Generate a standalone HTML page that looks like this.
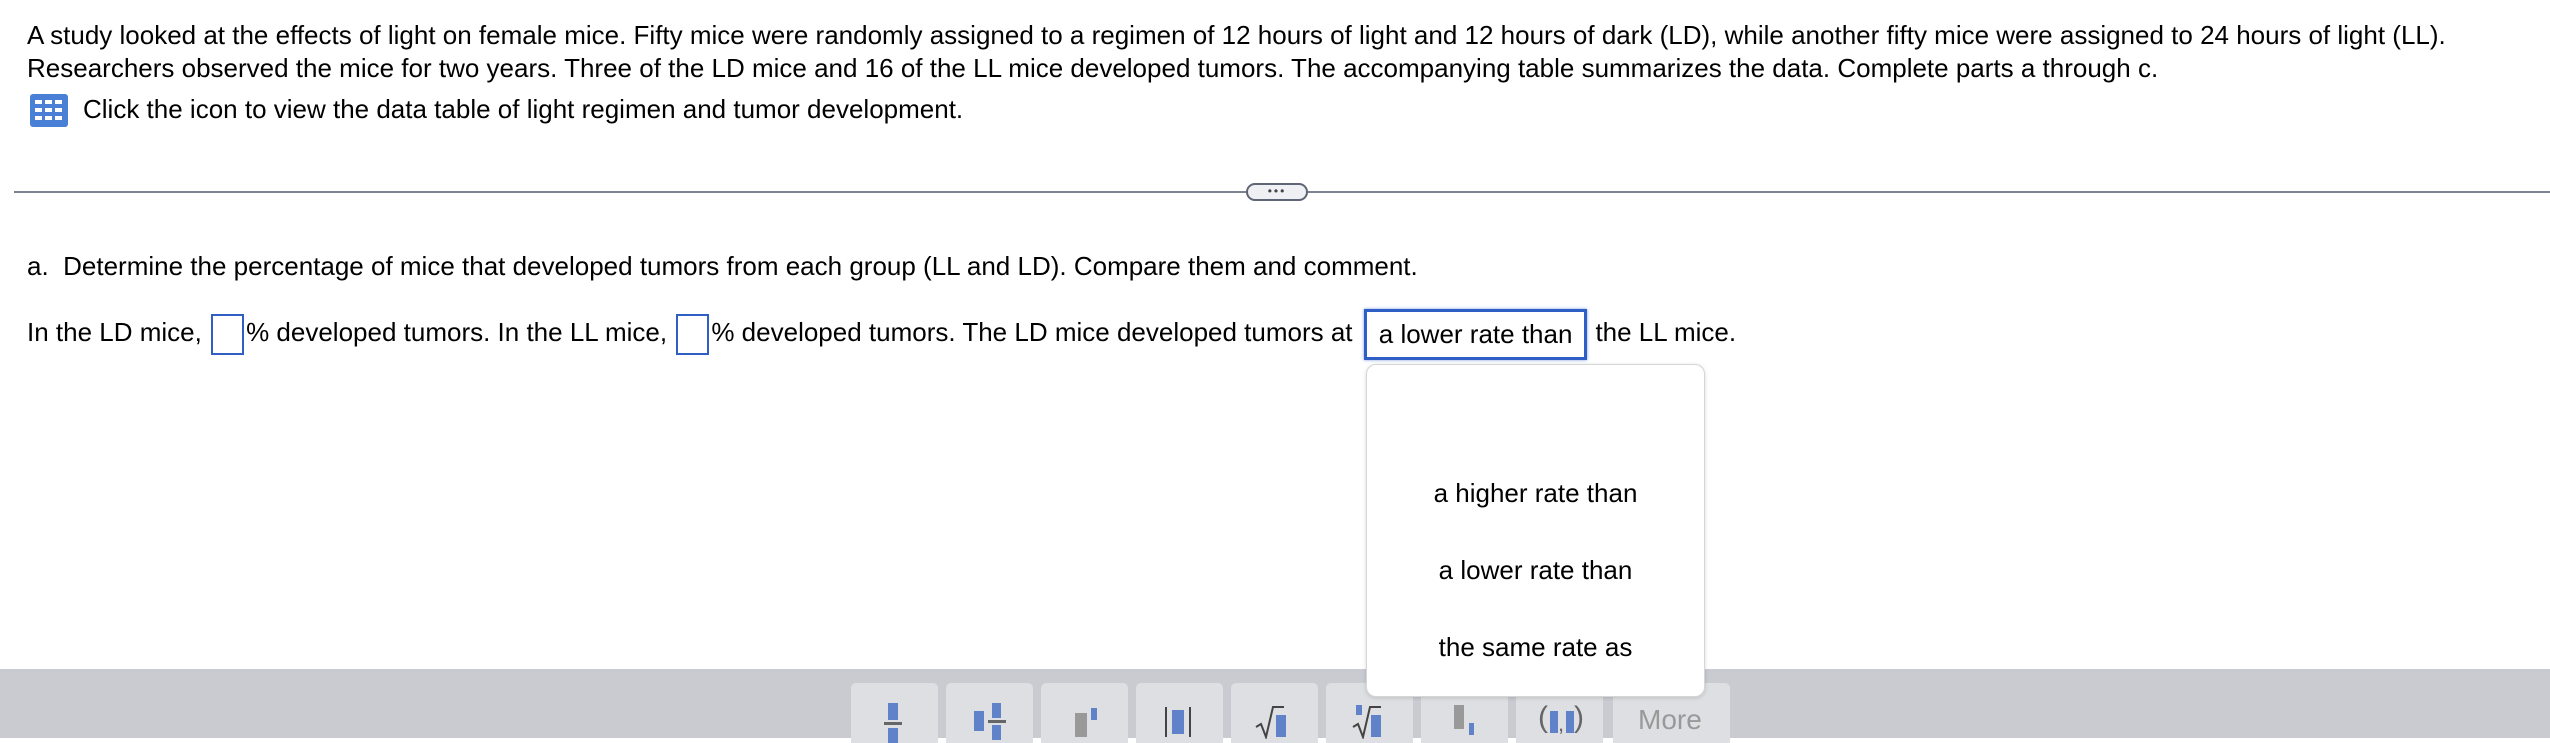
<!DOCTYPE html>
<html><head><meta charset="utf-8"><style>
*{margin:0;padding:0;box-sizing:border-box}
body{width:2550px;height:738px;background:#fff;font-family:"Liberation Sans",Arial,sans-serif;color:#000;position:relative;overflow:hidden;font-size:26px}
.t{position:absolute;white-space:nowrap}
.box{display:inline-block;width:33px;height:41px;border:2px solid #2f5fc4;vertical-align:middle;margin:0 2px}
.sel{display:inline-block;border:3px solid #2f5fc4;height:51px;line-height:45px;padding:0 12px;vertical-align:middle;margin:0 8px 0 4px;box-shadow:0 0 3px #7a9be0}
.band{position:absolute;left:0;top:669px;width:2550px;height:69px;background:#c9cbd1}
.btn{position:absolute;top:683px;width:87px;height:60px;background:#dedfe2;border-radius:5px 5px 0 0}
.bl{position:absolute;background:#5f82c9}
.gr{position:absolute;background:#999}
.dd{position:absolute;left:1366px;top:364px;width:339px;height:333px;background:#fff;border:1px solid #d6d6d6;border-radius:10px;box-shadow:0 1px 4px rgba(0,0,0,.15)}
.dd div{position:absolute;left:0;width:100%;text-align:center}
</style></head><body>
<div class="t" style="left:27px;top:20px">A study looked at the effects of light on female mice. Fifty mice were randomly assigned to a regimen of 12 hours of light and 12 hours of dark (LD), while another fifty mice were assigned to 24 hours of light (LL).</div>
<div class="t" style="left:27px;top:53px">Researchers observed the mice for two years. Three of the LD mice and 16 of the LL mice developed tumors. The accompanying table summarizes the data. Complete parts a through c.</div>
<svg style="position:absolute;left:30px;top:94px" width="38" height="33" viewBox="0 0 38 33"><rect x="0" y="0" width="38" height="33" rx="3" fill="#4a7fd6"/><g fill="#fff"><rect x="5" y="6" width="7" height="4"/><rect x="15" y="6" width="7" height="4"/><rect x="25" y="6" width="7" height="4"/><rect x="5" y="14" width="7" height="4"/><rect x="15" y="14" width="7" height="4"/><rect x="25" y="14" width="7" height="4"/><rect x="5" y="22" width="7" height="4"/><rect x="15" y="22" width="7" height="4"/><rect x="25" y="22" width="7" height="4"/></g></svg>
<div class="t" style="left:83px;top:94px">Click the icon to view the data table of light regimen and tumor development.</div>
<div style="position:absolute;left:14px;top:191px;width:2536px;height:2px;background:#7b8290"></div>
<div style="position:absolute;left:1246px;top:183px;width:62px;height:18px;border:2px solid #5e6675;border-radius:9px;background:#eef0f3;text-align:center;font-size:12px;line-height:12px;color:#444;letter-spacing:2px">&bull;&bull;&bull;</div>
<div class="t" style="left:27px;top:251px">a.&nbsp; Determine the percentage of mice that developed tumors from each group (LL and LD). Compare them and comment.</div>
<div class="t" style="left:27px;top:307px;line-height:51px">In the LD mice, <span class="box"></span>% developed tumors. In the LL mice, <span class="box"></span>% developed tumors. The LD mice developed tumors at <span class="sel">a lower rate than</span>the LL mice.</div>
<div class="band"></div>
<div class="btn" style="left:851px"><div class="bl" style="left:37px;top:20px;width:10px;height:17px"></div><div style="position:absolute;left:33px;top:39px;width:18px;height:3px;background:#666"></div><div class="bl" style="left:37px;top:45px;width:10px;height:15px"></div></div>
<div class="btn" style="left:946px"><div class="bl" style="left:28px;top:28px;width:10px;height:20px"></div><div class="bl" style="left:46px;top:20px;width:9px;height:15px"></div><div style="position:absolute;left:42px;top:37px;width:18px;height:3px;background:#666"></div><div class="bl" style="left:46px;top:42px;width:9px;height:15px"></div></div>
<div class="btn" style="left:1041px"><div class="gr" style="left:34px;top:30px;width:12px;height:24px"></div><div class="bl" style="left:50px;top:25px;width:6px;height:12px"></div></div>
<div class="btn" style="left:1136px"><div style="position:absolute;left:29px;top:24px;width:2px;height:30px;background:#444"></div><div class="bl" style="left:36px;top:27px;width:12px;height:24px"></div><div style="position:absolute;left:53px;top:24px;width:2px;height:30px;background:#444"></div></div>
<div class="btn" style="left:1231px"><svg style="position:absolute;left:24px;top:22px" width="30" height="34"><path d="M1 22 L6 19 L11 32 L18 2 L29 2" fill="none" stroke="#444" stroke-width="2"/></svg><div class="bl" style="left:45px;top:32px;width:10px;height:22px"></div></div>
<div class="btn" style="left:1326px"><div class="bl" style="left:30px;top:22px;width:6px;height:10px"></div><svg style="position:absolute;left:26px;top:22px" width="30" height="34"><path d="M1 22 L6 19 L11 32 L18 2 L29 2" fill="none" stroke="#444" stroke-width="2"/></svg><div class="bl" style="left:45px;top:32px;width:10px;height:22px"></div></div>
<div class="btn" style="left:1421px"><div class="gr" style="left:33px;top:22px;width:10px;height:24px"></div><div class="bl" style="left:48px;top:40px;width:5px;height:12px"></div></div>
<div class="btn" style="left:1516px"><div class="t" style="left:22px;top:18px;font-size:30px;color:#666">(</div><div class="bl" style="left:34px;top:28px;width:8px;height:22px"></div><div class="t" style="left:42px;top:28px;font-size:22px;color:#666">,</div><div class="bl" style="left:50px;top:28px;width:8px;height:22px"></div><div class="t" style="left:58px;top:18px;font-size:30px;color:#666">)</div></div>
<div class="btn" style="left:1613px;width:117px"><div class="t" style="left:25px;top:21px;font-size:28px;color:#999">More</div></div>
<div class="dd"><div style="top:113px">a higher rate than</div><div style="top:190px">a lower rate than</div><div style="top:267px">the same rate as</div></div>
</body></html>
